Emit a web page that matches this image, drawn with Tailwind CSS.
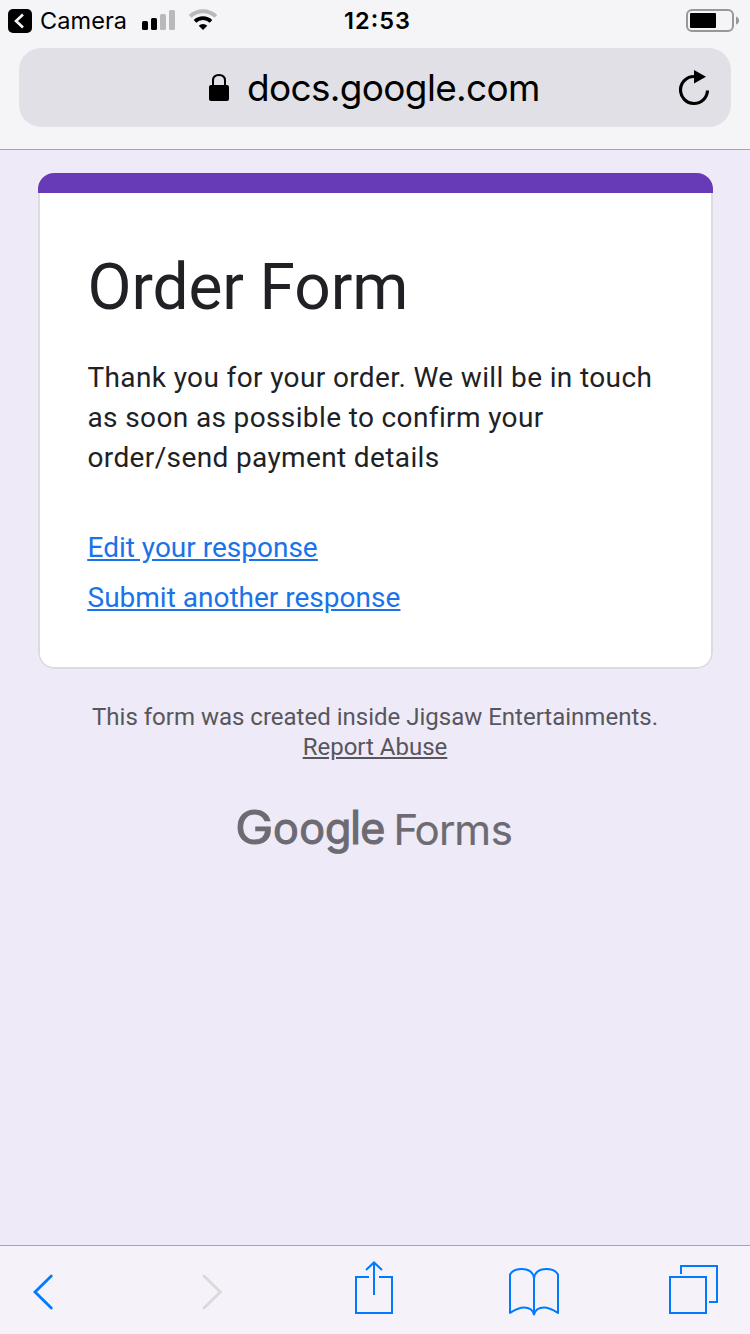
<!DOCTYPE html>
<html lang="en">
<head>
  <meta charset="UTF-8" />
  <meta name="viewport" content="width=device-width, initial-scale=1.0"/>
  <title>Order Form</title>
  <script src="https://cdn.jsdelivr.net/npm/@tailwindcss/browser@4"></script>
</head>
<body class="flex flex-col h-[1334px] w-[750px] overflow-hidden bg-[#eeeaf8] font-[Roboto,sans-serif]">

  <!-- Status bar and address bar -->
  <header class="h-[150px] shrink-0 bg-[#f5f5f8] border-b border-[#a5a3ac] font-[Inter,sans-serif] text-black">
    <div class="h-12 grid grid-cols-[1fr_auto_1fr] items-start pl-2">
      <div class="flex pt-[9px]">
        <svg class="size-6" viewBox="0 0 24 24">
          <rect width="24" height="24" rx="5"/>
          <path d="M15 5.5 L8 12 L15 18.5" fill="none" stroke="#f5f5f8" stroke-width="2.6"/>
        </svg>
        <svg class="w-[90px] h-6 overflow-visible" viewBox="0 0 90 24">
          <text x="8" y="20" font-size="23.5" textLength="87" lengthAdjust="spacing">Camera</text>
        </svg>
        <svg class="ml-5 w-[33px] h-6" viewBox="0 0 33 24">
          <rect x="0" y="12" width="6" height="9" rx="1.5"/>
          <rect x="9" y="9" width="6" height="12" rx="1.5"/>
          <rect x="18" y="5" width="6" height="16" rx="1.5" fill="#b9b9bb"/>
          <rect x="27" y="1" width="6" height="20" rx="1.5" fill="#b9b9bb"/>
        </svg>
        <svg class="ml-3.5 w-7 h-6" viewBox="0 0 28 24" fill="none">
          <path d="M1.2 7.4 A18.5 18.5 0 0 1 26.8 7.4" stroke="#b9b9bb" stroke-width="4"/>
          <path d="M6 12.3 A11.7 11.7 0 0 1 22 12.3" stroke="#000" stroke-width="3.8"/>
          <path d="M9.7 16.7 A6 6 0 0 1 18.3 16.7 L14 21 Z" fill="#000"/>
        </svg>
      </div>
      <svg class="w-[70px] h-12" viewBox="0 0 70 48">
        <text x="0" y="29" font-size="23.5" font-weight="600" textLength="66" lengthAdjust="spacing">12:53</text>
      </svg>
      <div class="flex justify-end pt-[9px] pr-[11px]">
        <svg class="w-[53px] h-[23px]" viewBox="0 0 53 23">
          <rect x="1" y="1" width="46" height="21" rx="5" fill="none" stroke="#98989a" stroke-width="2"/>
          <rect x="4" y="4" width="26" height="15" rx="1"/>
          <path d="M50 7.5 Q53 8.5 53 11.5 T50 15.5 Z" fill="#98989a"/>
        </svg>
      </div>
    </div>
    <div class="ml-[19px] w-[712px] h-[79px] rounded-[22px] bg-[#e1e0e6] flex">
      <svg class="ml-[190px] mt-6 w-5 h-8" viewBox="0 0 20 32">
        <rect x="0" y="13" width="20" height="16" rx="2"/>
        <path d="M4 15 V8.5 Q4 3 10 3 T16 8.5 V15" fill="none" stroke="#000" stroke-width="2"/>
      </svg>
      <svg class="ml-[18px] w-[294px] h-[79px]" viewBox="0 0 294 79">
        <text x="0" y="53" font-size="37" textLength="293.5" lengthAdjust="spacing">docs.google.com</text>
      </svg>
      <svg class="ml-[138px] mt-[21px] w-[32px] h-[38px]" viewBox="0 0 32 38">
        <path d="M15 7.5 A13.5 13.5 0 1 0 28.5 21.5" fill="none" stroke="#000" stroke-width="3.2"/>
        <path d="M15 1 L27 7.7 L15 14.5 Z"/>
      </svg>
    </div>
  </header>

  <main class="flex-1 flex flex-col items-center pt-[23px]">
    <div class="w-[675px] h-[495.5px] rounded-2xl overflow-hidden bg-white flex flex-col">
      <div class="h-5 shrink-0 bg-[#673ab7]"></div>
      <div class="flex-1 border-2 border-t-0 border-[#dadce0] rounded-b-2xl px-12 pt-[55px] text-[#202124]">
        <h1 class="text-[64px] leading-[80px] tracking-[-0.1px] whitespace-nowrap">Order Form</h1>
        <p class="mt-[30px] text-[28px] leading-[40px] tracking-[0.37px]">Thank you for your order. We will be in touch<br>as soon as possible to confirm your<br>order/send payment details</p>
        <div class="mt-[50px] flex flex-col items-start gap-2.5 text-[28px] leading-[40px] text-[#1a73e8] underline">
          <a>Edit your response</a>
          <a>Submit another response</a>
        </div>
      </div>
    </div>
    <div class="mt-[33px] text-center text-2xl leading-[30px] text-[#58565d]">
      <p>This form was created inside Jigsaw Entertainments.</p>
      <a class="underline">Report Abuse</a>
    </div>
    <svg class="mt-[38px] w-[278px] h-[60px] overflow-visible font-[Inter,sans-serif]" viewBox="0 0 278 60" fill="#6d6a72" stroke="#6d6a72">
      <text x="-1" y="44.3" font-size="46" stroke-width="0.9" transform="scale(1.12 1)">G</text>
      <text x="37 63.3 89 114 124.2" y="44.3" font-size="43" stroke-width="1.1">oog<tspan font-size="46">l</tspan>e</text>
      <text x="157.5 178.5 203 218.3 254.7" y="45" font-size="42" stroke-width="0.2">Forms</text>
    </svg>
  </main>

  <!-- Browser toolbar -->
  <footer class="h-[89px] shrink-0 border-t border-[#a5a3ac] bg-[#f5f3f9] pl-[31px] pr-[31px] pt-3.5 flex">
    <svg class="w-6 h-14" viewBox="0 0 24 56" fill="none" stroke="#007aff" stroke-width="2.8" stroke-linecap="round">
      <path d="M20.3 16 L4 32 L20.3 48"/>
    </svg>
    <svg class="ml-[145px] w-6 h-14" viewBox="0 0 24 56" fill="none" stroke="#dad9de" stroke-width="2.8" stroke-linecap="round">
      <path d="M4 16 L20.3 32 L4 48"/>
    </svg>
    <svg class="ml-[131px] w-[38px] h-14" viewBox="0 0 38 56" fill="none" stroke="#007aff" stroke-width="2">
      <path d="M14 17 H1 V53 H37 V17 H24 M19 35 V3 M11 10 L19 2.4 L27 10"/>
    </svg>
    <svg class="ml-[115px] w-[52px] h-14" viewBox="0 0 52 56" fill="none" stroke="#007aff" stroke-width="2" stroke-linejoin="round">
      <path d="M26 54.5 V18 C25 12 20 9 13.5 9 C8 9 4 11 2 14.5 V53 C6 50.5 10 47.5 16 47.5 C22 47.5 25 50.5 26 54.5 C27 50.5 30 47.5 36 47.5 C42 47.5 46 50.5 50 53 V14.5 C48 11 44 9 38.5 9 C32 9 27 12 26 18"/>
    </svg>
    <svg class="ml-[109px] w-[50px] h-14" viewBox="0 0 50 56" fill="none" stroke="#007aff" stroke-width="2">
      <path d="M1 17 H37 V53 H1 Z M12 14 V6 H48 V42 H40"/>
    </svg>
  </footer>
</body>
</html>
